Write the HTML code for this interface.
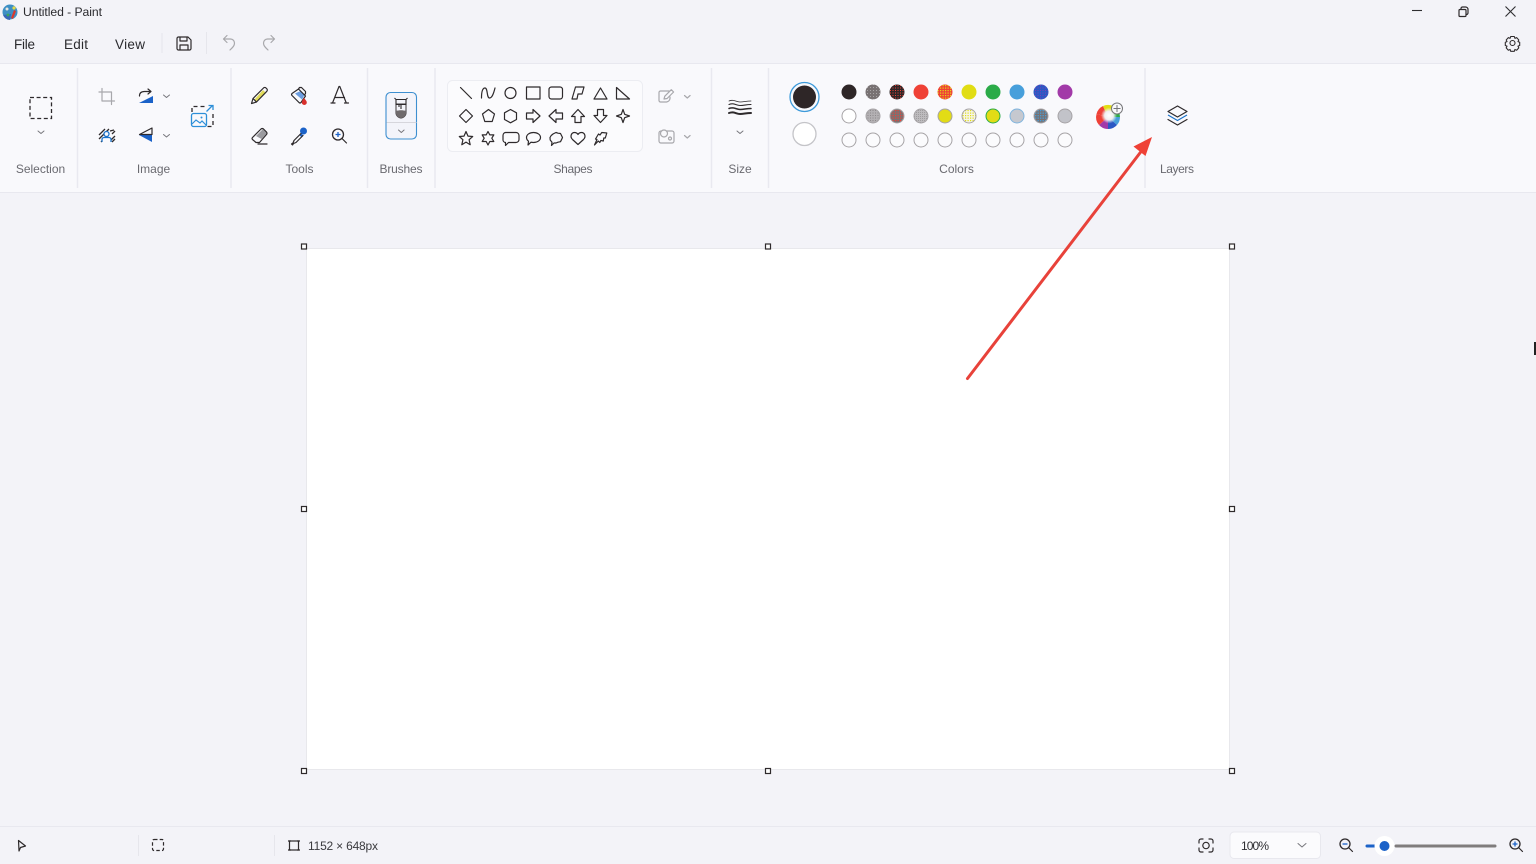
<!DOCTYPE html>
<html><head><meta charset="utf-8"><title>Untitled - Paint</title>
<style>
html,body{margin:0;padding:0;width:1536px;height:864px;overflow:hidden;background:#f3f3f8}
svg{display:block;position:absolute;left:0;top:0}
text{font-family:"Liberation Sans",sans-serif}
.m{font-size:13.5px;fill:#2a2a2e}
.l{font-size:12px;fill:#6a6a70;text-anchor:middle}
.i{fill:none;stroke:#2e2a2c;stroke-width:1.2;stroke-linejoin:round;stroke-linecap:round}
.g{fill:none;stroke:#a8a8ac;stroke-width:1.2;stroke-linejoin:round;stroke-linecap:round}
.c{fill:none;stroke:#77777c;stroke-width:1;stroke-linecap:round;stroke-linejoin:round}
.s{stroke:#e9e9f0;stroke-width:1.5}
</style></head><body>
<svg width="1536" height="864" viewBox="0 0 1536 864" xmlns="http://www.w3.org/2000/svg">
<defs>
<pattern id="p1" width="2.500" height="2.500" patternUnits="userSpaceOnUse"><rect width="2.500" height="2.500" fill="#2e2627"/><rect width="1" height="1" fill="#ef4136"/></pattern>
<pattern id="p2" width="2.500" height="2.500" patternUnits="userSpaceOnUse"><rect width="2.500" height="2.500" fill="#ef4136"/><rect width="1.200" height="1.200" fill="#e1dd14"/></pattern>
<pattern id="p3" width="3" height="3" patternUnits="userSpaceOnUse"><rect width="3" height="3" fill="#787273"/><rect width="1" height="1" fill="#a8a5a6"/></pattern>
<pattern id="p4" width="2.500" height="2.500" patternUnits="userSpaceOnUse"><rect width="2.500" height="2.500" fill="#2b58c4"/><rect width="1" height="1" fill="#7d3fb0"/></pattern>
<pattern id="p5" width="2.500" height="2.500" patternUnits="userSpaceOnUse"><rect width="2.500" height="2.500" fill="#b3b0b3"/><rect width="1" height="1" fill="#8c898b"/></pattern>
<pattern id="p6" width="2.500" height="2.500" patternUnits="userSpaceOnUse"><rect width="2.500" height="2.500" fill="#787273"/><rect width="1.200" height="1.200" fill="#ef4136"/></pattern>
<pattern id="p7" width="2" height="2" patternUnits="userSpaceOnUse"><rect width="2" height="2" fill="#bdbbbe"/><rect width="1" height="1" fill="#9f9d9f"/></pattern>
<pattern id="p8" width="2.500" height="2.500" patternUnits="userSpaceOnUse"><rect width="2.500" height="2.500" fill="#f5f4ea"/><rect width="1.200" height="1.200" fill="#e1dd14"/></pattern>
<pattern id="p9" width="2.500" height="2.500" patternUnits="userSpaceOnUse"><rect width="2.500" height="2.500" fill="#787273"/><rect width="1.300" height="1.300" fill="#479fdb"/></pattern>
<radialGradient id="wc"><stop offset="0" stop-color="#fff"/><stop offset=".55" stop-color="#f0f0f0"/><stop offset="1" stop-color="#f0f0f0" stop-opacity="0"/></radialGradient>
</defs>
<rect width="1536" height="864" fill="#f3f3f8"/>
<!-- ribbon -->
<rect x="0" y="64" width="1536" height="128" fill="#f9f9fc"/>
<path d="M0 63.5H1536M0 192.5H1536" stroke="#e8e8ef"/>
<path class="s" d="M77.5 68V188M231 68V188M367.5 68V188M435 68V188M711.5 68V188M768.5 68V188M1145 68V188"/>
<!-- title -->
<g>
<circle cx="10" cy="12" r="7.5" fill="#3d8fc4"/>
<path d="M3 15a8 8 0 0 0 7 5l1-6z" fill="#3767b8"/><circle cx="7" cy="9" r="1.5" fill="#e8e6e0"/><circle cx="14" cy="8" r="1.6" fill="#e2d84a"/><path d="M14 10l2 1-3 8-2-1z" fill="#d8392f"/><circle cx="8" cy="15" r="1.4" fill="#3aa85a"/>
</g>
<text x="23" y="16" font-size="12.2" fill="#2a2a2e" textLength="79">Untitled - Paint</text>
<text class="m" x="14" y="49" textLength="21">File</text>
<text class="m" x="64" y="49" textLength="24">Edit</text>
<text class="m" x="115" y="49" textLength="30">View</text>
<path d="M162 33V53M206.500 32V54" stroke="#e6e6ec"/>
<!-- save -->
<path class="i" stroke-width="1.300" d="M178.500 37h9.500l3 3v8.500a1.500 1.500 0 0 1-1.500 1.500h-11a1.500 1.500 0 0 1-1.500-1.500V38.500a1.500 1.500 0 0 1 1.500-1.500zM180 37v4h7v-4M180 50v-5h8v5"/>
<!-- undo/redo -->
<path class="g" d="M227 35.500l-3.500 3.500 3.500 3.500M223.500 39h7a4 4 0 0 1 4 4c0 3-2 4.500-4.500 7"/>
<path class="g" d="M271 35.500l3.500 3.500-3.500 3.500M274.500 39h-7a4 4 0 0 0-4 4c0 3 2 4.500 4.500 7"/>
<!-- window controls -->
<path d="M1412 10.500h10" stroke="#2e2e30" stroke-width="1.100"/>
<path class="i" stroke-width="1.100" d="M1459 10.500a1 1 0 0 1 1-1h5a1 1 0 0 1 1 1v5a1 1 0 0 1-1 1h-5a1 1 0 0 1-1-1zM1461 9.500v-1a1.500 1.500 0 0 1 1.500-1.500h3a2.500 2.500 0 0 1 2.500 2.500v3.500a1.500 1.500 0 0 1-1.500 1.500h-.5"/>
<path d="M1505.500 6.500l10 10M1515.500 6.500l-10 10" stroke="#2e2e30" stroke-width="1.100"/>
<!-- settings gear -->
<g class="i" stroke-width="1" transform="translate(1512.500 43) scale(.9)"><circle r="2.800"/><path d="M-2 -7.200h4l.7 2 1.900-.8 2.400 2.600-.9 1.900 1.900.7v3.600l-1.900.7.9 1.900-2.400 2.600-1.900-.8-.7 2h-4l-.7-2-1.900.8-2.400-2.600.9-1.900-1.900-.7v-3.600l1.900-.7-.9-1.900 2.400-2.600 1.900.8z"/></g>

<!-- selection -->
<rect x="30" y="97.500" width="21.500" height="21" fill="none" stroke="#2e2a2c" stroke-width="1.300" stroke-dasharray="4 2.600"/>
<path class="c" d="M38 131l3 2.500 3-2.500"/>
<text class="l" x="40.500" y="173">Selection</text>
<!-- image -->
<path class="g" d="M102 88.500v12.500h12.500M99 92h12.500V104.500"/>
<path d="M139 103l14-7v7z" fill="#1b62c8"/>
<path class="i" stroke-width="1.300" d="M139.500 96c0-3 2-4.500 5-4.500h6M148 89l3 2.500-3 2.500"/>
<path class="c" stroke="#9a9a9f" d="M163.500 95l3 2.500 3-2.500"/>
<path d="M139 135l13-.5v7.500z" fill="#1b62c8"/>
<path class="i" stroke-width="1.200" d="M139.500 134.500l12.500-6.500v6.500z"/>
<path class="c" stroke="#9a9a9f" d="M163.500 134.500l3 2.500 3-2.500"/>
<g stroke="#2e2a2c" stroke-width="1.300"><path d="M99 135l6-6M99 139l10-10M101 142l4-4M110 141l5-5M112 142l3-3M110 131l4-1M112 134l3-3"/></g>
<circle cx="106.500" cy="134" r="2.500" fill="#f9f9fc" stroke="#1b72c8" stroke-width="1.300"/>
<path d="M102 142v-2.500a2 2 0 0 1 2-2h5a2 2 0 0 1 2 2v2.500" fill="#f9f9fc" stroke="#1b72c8" stroke-width="1.300"/>
<path fill="none" stroke="#2e2a2c" stroke-width="1.300" stroke-dasharray="4 3" d="M192 112v-5.500h14M213 114v12.500h-6"/>
<rect x="191.500" y="113.500" width="15" height="13" rx="2" fill="none" stroke="#2d8fd8" stroke-width="1.300"/>
<path d="M192 124l4-4 4 3 2-2 4 4" fill="none" stroke="#2d8fd8" stroke-width="1.200"/>
<circle cx="201.500" cy="117.500" r="1" fill="#2d8fd8"/>
<path d="M206.500 111.500l6-6M208.500 105.500h4.500v4.500" fill="none" stroke="#2d8fd8" stroke-width="1.300"/>
<text class="l" x="153.500" y="173">Image</text>
<!-- tools -->
<path d="M254 100l9-10 3 3-10 9z" fill="#e2dc5a"/>
<path class="i" stroke-width="1.300" d="M251.500 103.500l1.500-5 10.500-10.500a1.800 1.800 0 0 1 2.500 0l.8.800a1.800 1.800 0 0 1 0 2.500L256.500 102zM253 98.500l3.500 3.500"/>
<path d="M295 93.500l5.500-2.500 4 4-2.500 4.500z" fill="#6d9ee0"/>
<path class="i" stroke-width="1.300" d="M292 93.500l6.500-4.500 7 7-4.500 6.500a1.500 1.500 0 0 1-2 0l-7-7a1.500 1.500 0 0 1 0-2zM298.500 89l1-1.500 2 0 4 4 0 2-1 1.500"/>
<path d="M304 98c1.500 1.800 2.800 3 2.800 4.500a2.500 2.500 0 0 1-5 0c0-1.500 1-2.700 2.200-4.500z" fill="#d8302c"/>
<path class="i" stroke-width="1" d="M332.500 103l6.500-16.500h.8l6.500 16.500M331 103h4M344.500 103h4M335 97.500h9.500"/>
<path d="M256 136l7-7 4 4-5.500 6z" fill="#9b9b9f"/>
<path class="i" stroke-width="1.300" d="M252.500 137.500l8.500-8.500a2 2 0 0 1 2.500 0l3 3a2 2 0 0 1 0 2.500l-7 8h-3.500l-3.500-3a1.500 1.500 0 0 1 0-2zM258 144h9"/>
<circle cx="303.500" cy="131" r="3.500" fill="#1b62c8"/>
<path d="M300 134l2.500 2.500" stroke="#1b62c8" stroke-width="2.500"/>
<path class="i" stroke-width="1.300" d="M301 133.500l-7 7-1 2.500-1.500 1 1 1 1-1.500 2.500-1 7-7"/>
<circle cx="338" cy="134.500" r="5.500" fill="none" stroke="#2e2a2c" stroke-width="1.300"/>
<path class="i" stroke-width="1.300" d="M342 138.500l4.500 4.500"/>
<path d="M335.500 134.500h5M338 132v5" stroke="#1b62c8" stroke-width="1.300"/>
<text class="l" x="299.500" y="173">Tools</text>
<!-- brushes -->
<rect x="386" y="92.500" width="30.500" height="46.500" rx="4.500" fill="#f3f4fa" stroke="#3d8fd0" stroke-width="1.100"/>
<path d="M386.500 122.500h30" stroke="#d6d6dc"/>
<path d="M396 104h10v9c0 2.500-2.500 5-5 5s-5-2.500-5-5z" fill="#f3f4fa" stroke="#3a3638" stroke-width="1"/>
<path d="M396 111c3-1 7-1 10 0v2.500c0 2-2.500 4.500-5 4.500s-5-2.500-5-4.500z" fill="#6f6b6d"/>
<path d="M394.500 98l1.500 1.500h10l1.500-1.500M396 99.500v5h10v-5M399 104v3M401 104v5" fill="none" stroke="#2e2a2c" stroke-width="1.100"/>
<path class="c" d="M398.500 130l2.800 2.500 2.800-2.500"/>
<text class="l" x="401" y="173" textLength="43">Brushes</text>
<!-- shapes -->
<rect x="447.500" y="80.500" width="195" height="71" rx="5" fill="#fbfbfd" stroke="#ecedf2"/>
<g class="i">
<path d="M460.500 87.500l11 11"/>
<path d="M481.500 98c0-6 1-10 3.500-10 3 0 1.500 10 4.500 10 2.500 0 4-4 5.500-10"/>
<circle cx="510.500" cy="93" r="5.500"/>
<rect x="526.500" y="87" width="13.500" height="12"/>
<rect x="549" y="87" width="13.500" height="12" rx="2.500"/>
<path d="M572 99l3.500-12h8.500l-2 7h-4l-1 5z"/>
<path d="M594 99l6.500-11 6.500 11z"/>
<path d="M616.500 87.500v11.500h13z"/>
<path d="M466 109.500l6.500 6.500-6.500 6.500-6.500-6.500z"/>
<path d="M488.500 109.500l6 4.500-2.300 7.500h-7.400l-2.300-7.500z"/>
<path d="M510.500 109.500l6 3.300v6.700l-6 3.300-6-3.300v-6.700z"/>
<path d="M526.500 113h6.500v-3.500l7 6.500-7 6.500v-3.500h-6.500z"/>
<path d="M562.500 113h-6.500v-3.500l-7 6.500 7 6.500v-3.500h6.500z"/>
<path d="M578 109.500l6.500 7h-3.500v6h-6v-6h-3.500z"/>
<path d="M600.500 122.500l6.500-7h-3.500v-6h-6v6h-3.500z"/>
<path d="M623 109.500l1.700 4.800 4.800 1.700-4.800 1.700-1.700 4.800-1.700-4.800-4.800-1.700 4.800-1.700z"/>
<path d="M466 131.500l2 4.600 4.700.4-3.600 3.200 1.100 5-4.200-2.600-4.200 2.600 1.100-5-3.600-3.200 4.700-.4z"/>
<path d="M488 131.500l1.800 3.400h4l-2 3.300 2 3.300h-4l-1.800 3.500-1.800-3.500h-4l2-3.300-2-3.300h4z"/>
<path d="M505.500 132.500h10.500a3 3 0 0 1 3 3v4a3 3 0 0 1-3 3h-7.500l-3 3v-3a2.800 2.800 0 0 1-2.500-3v-4a3 3 0 0 1 2.500-3z"/>
<path d="M533.500 132.500c4 0 7 2.200 7 5s-3 5-7 5c-1 0-2 0-2.500-.3l-3 2.800.5-3.800c-1.300-1-2-2.200-2-3.700 0-2.800 3-5 7-5z"/>
<path d="M556 132.500l2 .7 2.500.3 1 2 1 2-1 2.200-1 2-2.500.5-2 .8-2 0-2.500 2.500.5-3.300-1.800-2.200-.2-2.500 1.200-2 2-1.600z"/>
<path d="M578 144.500l-5.500-5c-3-3-1-7 2-7 1.500 0 2.800.8 3.500 2 .7-1.200 2-2 3.500-2 3 0 5 4 2 7z"/>
<path d="M594.500 145l2.500-5.500-1.500-.5 3-5 1.500 1 1.800-2.500 5 .5-1.500 5-1.500 0-.5 3-2.500-.5-1 2-1.500-1.500z"/>
</g>
<text class="l" x="573" y="173" textLength="39">Shapes</text>
<!-- outline / fill -->
<g class="g">
<path d="M669 91h-8.500a1.500 1.500 0 0 0-1.500 1.500v8a1.500 1.500 0 0 0 1.500 1.500h6a4 4 0 0 0 3.500-3.500V97M664 99l.8-2.800 6.500-6.500 2.300 2.300-6.500 6.500z"/>
<path d="M684.500 95.500l2.800 2.500 2.800-2.500"/>
<rect x="659" y="131" width="15" height="12" rx="2"/><circle cx="664" cy="133.500" r="3.500" fill="#f9f9fc"/><circle cx="670" cy="138.500" r="1.500"/>
<path d="M684.500 135.500l2.800 2.500 2.800-2.500"/>
</g>
<!-- size -->
<g fill="none" stroke="#2e2a2c" stroke-linecap="round">
<path stroke-width=".8" d="M729 101c5-2 7 1 11 1s6-1 11-1"/>
<path stroke-width="1.100" d="M729 104.500c5-2 7 1 11 1s6-1 11-1"/>
<path stroke-width="1.500" d="M729 108.500c5-2 7 1 11 1s6-1 11-1"/>
<path stroke-width="2" d="M729 113c5-2 7 1 11 1s6-1 11-1"/>
</g>
<path class="c" d="M737 131l3 2.500 3-2.500"/>
<text class="l" x="740" y="173">Size</text>
<!-- active colors -->
<circle cx="804.500" cy="97" r="14.500" fill="#f9f9fc" stroke="#3d9ada" stroke-width="1.300"/>
<circle cx="804.500" cy="97" r="11.500" fill="#2e2627"/>
<circle cx="804.500" cy="134" r="11.500" fill="#fff" stroke="#c4c4c8" stroke-width="1.300"/>
<!-- palette -->
<g stroke="#a6a3a6" stroke-width="1">
<circle cx="849" cy="92" r="7.500" fill="#2e2627" stroke="none"/>
<circle cx="873" cy="92" r="7.500" fill="url(#p3)" stroke="none"/>
<circle cx="897" cy="92" r="7.500" fill="url(#p1)" stroke="none"/>
<circle cx="921" cy="92" r="7.500" fill="#ef4136" stroke="none"/>
<circle cx="945" cy="92" r="7.500" fill="url(#p2)" stroke="none"/>
<circle cx="969" cy="92" r="7.500" fill="#e1dd14" stroke="none"/>
<circle cx="993" cy="92" r="7.500" fill="#2bab48" stroke="none"/>
<circle cx="1017" cy="92" r="7.500" fill="#479fdb" stroke="none"/>
<circle cx="1041" cy="92" r="7.500" fill="url(#p4)" stroke="none"/>
<circle cx="1065" cy="92" r="7.500" fill="#a23aa8" stroke="none"/>
<circle cx="849" cy="116" r="7" fill="#fff"/>
<circle cx="873" cy="116" r="7" fill="url(#p5)"/>
<circle cx="897" cy="116" r="7" fill="url(#p6)"/>
<circle cx="921" cy="116" r="7" fill="url(#p7)"/>
<circle cx="945" cy="116" r="7" fill="#e2dc16"/>
<circle cx="969" cy="116" r="7" fill="url(#p8)"/>
<circle cx="993" cy="116" r="7" fill="#e2dc16" stroke="#2bab48"/>
<circle cx="1017" cy="116" r="7" fill="#c5c8cf" stroke="#7fb4de"/>
<circle cx="1041" cy="116" r="7" fill="url(#p9)"/>
<circle cx="1065" cy="116" r="7" fill="#c2c3c9"/>
<g fill="#fbfbfd">
<circle cx="849" cy="140" r="7"/><circle cx="873" cy="140" r="7"/><circle cx="897" cy="140" r="7"/><circle cx="921" cy="140" r="7"/><circle cx="945" cy="140" r="7"/><circle cx="969" cy="140" r="7"/><circle cx="993" cy="140" r="7"/><circle cx="1017" cy="140" r="7"/><circle cx="1041" cy="140" r="7"/><circle cx="1065" cy="140" r="7"/>
</g>
</g>
<!-- color wheel -->
<g transform="translate(1108 117)">
<path d="M0 0L-11.500 -3A12 12 0 0 1 -5 -11z" fill="#ef4136"/>
<path d="M0 0L-5 -11A12 12 0 0 1 6 -10.500z" fill="#e1dd14"/>
<path d="M0 0L6 -10.500A12 12 0 0 1 12 0z" fill="#2bab48"/>
<path d="M0 0L12 0A12 12 0 0 1 9 8z" fill="#479fdb"/>
<path d="M0 0L9 8A12 12 0 0 1 0 12z" fill="#2b58c4"/>
<path d="M0 0L0 12A12 12 0 0 1 -9 8z" fill="#a23aa8"/>
<path d="M0 0L-9 8A12 12 0 0 1 -11.500 -3z" fill="#ef4136"/>
<circle cx="1" cy="-1.500" r="8" fill="url(#wc)"/>
</g>
<circle cx="1117" cy="108.500" r="5.500" fill="#f9f9fc" stroke="#77777a"/>
<path d="M1113.500 108.500h7M1117 105v7" stroke="#77777a"/>
<text class="l" x="956.500" y="173">Colors</text>
<!-- layers -->
<path class="i" stroke-width="1.200" d="M1177.500 106l9.500 5.500-9.500 5.500-9.500-5.500z"/>
<path d="M1168 115l9.500 5.500 9.500-5.500" fill="none" stroke="#1b72c8" stroke-width="1.200" stroke-linejoin="round"/>
<path class="i" stroke-width="1.200" d="M1168 119.500l9.500 5.500 9.500-5.500"/>
<text class="l" x="1177" y="173" textLength="34">Layers</text>

<!-- canvas -->
<rect x="307" y="249" width="922" height="520" fill="#fff"/>
<path d="M306.500 249V769.500H1229.500V249M306.500 248.500H1229.500" fill="none" stroke="#e8e8ec"/>
<g fill="#fff" stroke="#2e2a2c" stroke-width="1.200">
<rect x="301.500" y="244" width="5" height="5"/><rect x="765.500" y="244" width="5" height="5"/><rect x="1229.500" y="244" width="5" height="5"/>
<rect x="301.500" y="506.500" width="5" height="5"/><rect x="1229.500" y="506.500" width="5" height="5"/>
<rect x="301.500" y="768.500" width="5" height="5"/><rect x="765.500" y="768.500" width="5" height="5"/><rect x="1229.500" y="768.500" width="5" height="5"/>
</g>
<!-- red arrow -->
<path d="M967.500 378.500L1143 149" stroke="#e8423a" stroke-width="3" stroke-linecap="round"/>
<path d="M1152 137l-18.500 9.500 12 9.500z" fill="#ef4136"/>
<!-- cursor sliver -->
<rect x="1534" y="342" width="2" height="13" fill="#222"/>

<!-- status bar -->
<path d="M0 826.500H1536" stroke="#e8e8ef"/>
<path d="M138.500 835V856M274.500 835V856" stroke="#e6e6ec"/>
<path class="i" stroke-width="1.300" d="M18.500 840.500l7 5.500-5 1.500-1.500 3.500z"/>
<rect x="152.500" y="839.500" width="11" height="11" rx="1.500" fill="none" stroke="#2e2a2c" stroke-width="1.200" stroke-dasharray="3.500 2.200"/>
<rect x="289.500" y="841" width="9" height="9" fill="none" stroke="#2e2a2c" stroke-width="1.200"/>
<path d="M288 841h3M297 841h3M288 850h3M297 850h3" stroke="#2e2a2c" stroke-width="1.200"/>
<text x="308" y="850" font-size="12" fill="#3a3a3e" textLength="70">1152 × 648px</text>
<!-- fit -->
<path class="i" stroke-width="1.200" d="M1199 843v-2a2 2 0 0 1 2-2h2M1209 839h2a2 2 0 0 1 2 2v2M1213 848v2a2 2 0 0 1-2 2h-2M1203 852h-2a2 2 0 0 1-2-2v-2"/>
<circle cx="1206" cy="845.500" r="3.200" fill="none" stroke="#2e2a2c" stroke-width="1.200"/>
<rect x="1230" y="832" width="90.500" height="26.500" rx="4" fill="#fbfbfd" stroke="#e8e8ee"/>
<text x="1241" y="850" font-size="12" fill="#2e2e32" textLength="28">100%</text>
<path class="c" stroke="#444" d="M1298 843.500l4 3.500 4-3.500"/>
<circle cx="1345" cy="844" r="5" fill="none" stroke="#2e2a2c" stroke-width="1.300"/>
<path class="i" stroke-width="1.300" d="M1349 848l3.500 3.500"/>
<path d="M1342.500 844h5" stroke="#1b62c8" stroke-width="1.300"/>
<path d="M1367 846h8" stroke="#1b62c8" stroke-width="3" stroke-linecap="round"/>
<path d="M1396 846h99" stroke="#7f7c7d" stroke-width="3" stroke-linecap="round"/>
<circle cx="1384.500" cy="846" r="10" fill="#fff"/>
<circle cx="1384.500" cy="846" r="5" fill="#1b62c8"/>
<circle cx="1515" cy="844" r="5" fill="none" stroke="#2e2a2c" stroke-width="1.300"/>
<path class="i" stroke-width="1.300" d="M1519 848l3.500 3.500"/>
<path d="M1512.500 844h5M1515 841.500v5" stroke="#1b62c8" stroke-width="1.300"/>
</svg>
</body></html>
